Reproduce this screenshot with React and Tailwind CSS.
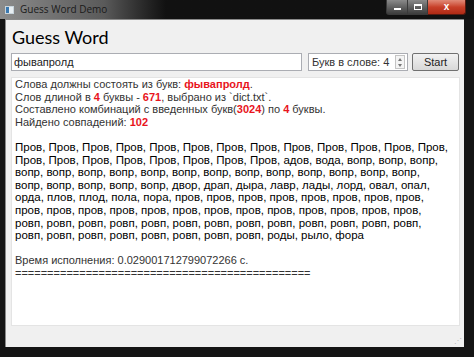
import React from 'react';

const font = { fontFamily: '"Liberation Sans", Arial, sans-serif' };

const listLines = [
  'Пров, Пров, Пров, Пров, Пров, Пров, Пров, Пров, Пров, Пров, Пров, Пров, Пров,',
  'Пров, Пров, Пров, Пров, Пров, Пров, Пров, Пров, адов, вода, вопр, вопр, вопр,',
  'вопр, вопр, вопр, вопр, вопр, вопр, вопр, вопр, вопр, вопр, вопр, вопр, вопр,',
  'вопр, вопр, вопр, вопр, вопр, двор, драп, дыра, лавр, лады, лорд, овал, опал,',
  'орда, плов, плод, пола, пора, пров, пров, пров, пров, пров, пров, пров, пров,',
  'пров, пров, пров, пров, пров, пров, пров, пров, пров, пров, пров, пров, пров,',
  'ровп, ровп, ровп, ровп, ровп, ровп, ровп, ровп, ровп, ровп, ровп, ровп, ровп,',
  'ровп, ровп, ровп, ровп, ровп, ровп, ровп, ровп, роды, рыло, фора',
];

const Red = ({ children }) => <span className="font-bold text-[#e8141c]">{children}</span>;

const CaptionButtons = () => (
  <div className="absolute right-[8px] top-0 flex h-[15px]">
    <div className="flex w-[22px] items-center justify-center rounded-bl-[3px] border border-t-0 border-[#3a3a3a] bg-gradient-to-b from-[#8a8a8a] to-[#3c3c3c]">
      <div className="mt-[4px] h-[2px] w-[7px] bg-white" />
    </div>
    <div className="flex w-[20px] items-center justify-center border border-l-0 border-t-0 border-[#3a3a3a] bg-gradient-to-b from-[#8a8a8a] to-[#3c3c3c]">
      <div className="h-[6px] w-[8px] border-[1.5px] border-t-[2px] border-white" />
    </div>
    <div className="flex w-[38px] items-center justify-center rounded-br-[3px] border border-l-0 border-t-0 border-[#5a1a10] bg-gradient-to-b from-[#e08a78] via-[#c8402a] to-[#b02a14]">
      <span className="text-[10px] font-bold leading-none text-white" style={font}>x</span>
    </div>
  </div>
);

export default function App() {
  return (
    <div className="relative flex h-[357px] w-[474px] flex-col overflow-hidden bg-[#141414]" style={font}>
      {/* title bar */}
      <div className="relative flex h-[19px] items-center bg-gradient-to-r from-[#8c8c8c] via-[#5a5a5a] via-[22%] to-[#111] to-[35%]">
        <div className="ml-[5px] h-[8px] w-[9px] border border-[#c8d4dc] bg-[#e8eef2]">
          <div className="h-full w-[3px] bg-[#3a78b0]" />
        </div>
        <span className="ml-[6px] text-[10px] text-[#1a1a1a]" style={{ fontFamily: '"Open Sans", sans-serif' }}>
          Guess Word Demo
        </span>
        <CaptionButtons />
      </div>

      {/* window body */}
      <div className="flex flex-1 pb-[10px] pl-[5px] pr-[10px]">
        <div className="flex flex-1 flex-col border-l border-t border-[#8a8a8a] bg-[#f0f0f0]">
          <div className="h-[33px] pl-[6px] pt-[6px] text-[18px] leading-[22px] text-black" style={{ fontFamily: 'Lato, sans-serif' }}>
            Guess Word
          </div>

          <div className="flex h-[18px] items-stretch px-[5px]">
            <div className="flex flex-1 items-center border border-[#abadb3] bg-white pl-[2px] text-[11px] text-[#222]">
              фывапролд
            </div>
            <div className="ml-[6px] flex w-[100px] items-center border border-[#abadb3] bg-white pl-[3px] text-[11px] text-[#333]">
              <span className="flex-1">Букв в слове: 4</span>
              <div className="mr-[2px] flex h-[14px] w-[10px] flex-col border border-[#c4c4c4] bg-[#f4f4f4]">
                <div className="flex flex-1 items-center justify-center">
                  <div className="h-0 w-0 border-x-[2px] border-b-[3px] border-x-transparent border-b-[#777]" />
                </div>
                <div className="flex flex-1 items-center justify-center">
                  <div className="h-0 w-0 border-x-[2px] border-t-[3px] border-x-transparent border-t-[#777]" />
                </div>
              </div>
            </div>
            <button className="ml-[4px] flex w-[47px] items-center justify-center rounded-[2px] border border-[#707070] bg-gradient-to-b from-[#f2f2f2] to-[#d8d8d8] text-[11px] text-[#222]">
              Start
            </button>
          </div>

          <div className="ml-[5px] mr-[4px] mt-[6px] h-[249px] border border-[#e4e4e4] bg-white pl-[3px] text-[11px] leading-[12.6px]">
            <div className="text-[#333]">
              <div>Слова должны состоять из букв: <Red>фывапролд</Red>.</div>
              <div>Слов длиной в <Red>4</Red> буквы - <Red>671</Red>, выбрано из `dict.txt`.</div>
              <div>Составлено комбинаций с введенных букв(<Red>3024</Red>) по <Red>4</Red> буквы.</div>
              <div>Найдено совпадений: <Red>102</Red></div>
            </div>
            <div className="mt-[12.6px] text-[11.5px] text-black">
              {listLines.map((l, i) => (
                <div key={i} className="whitespace-nowrap">{l}</div>
              ))}
            </div>
            <div className="mt-[12.6px] text-[#333]">
              <div>Время исполнения: 0.029001712799072266 с.</div>
              <div className="whitespace-nowrap">==============================================</div>
            </div>
          </div>

          <div className="relative flex-1">
            <div className="absolute bottom-[2px] right-[2px] text-[8px] leading-none text-[#b8b8b8]">⋰</div>
          </div>
        </div>
      </div>
    </div>
  );
}
